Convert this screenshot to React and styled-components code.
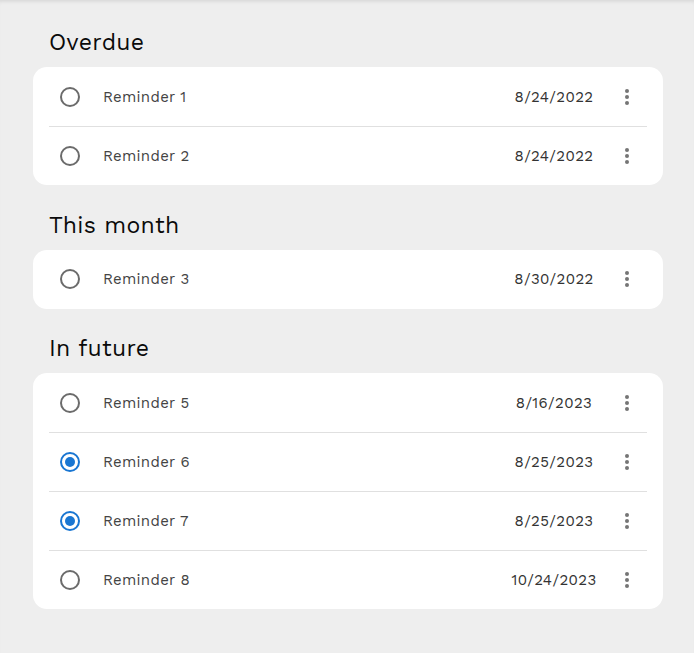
import React from "react";
import styled, { createGlobalStyle } from "styled-components";

const sections = [
  {
    title: "Overdue",
    items: [
      { name: "Reminder 1", date: "8/24/2022" },
      { name: "Reminder 2", date: "8/24/2022" },
    ],
  },
  {
    title: "This month",
    items: [{ name: "Reminder 3", date: "8/30/2022" }],
  },
  {
    title: "In future",
    items: [
      { name: "Reminder 5", date: "8/16/2023" },
      { name: "Reminder 6", date: "8/25/2023", done: true },
      { name: "Reminder 7", date: "8/25/2023", done: true },
      { name: "Reminder 8", date: "10/24/2023" },
    ],
  },
];

const GlobalStyle = createGlobalStyle`
  html, body {
    margin: 0;
    background: #eeeeee;
    font-family: "Work Sans", Inter, "Noto Sans", sans-serif;
  }
`;

const Page = styled.div`
  min-height: 653px;
  box-sizing: border-box;
  padding: 29px 31px 24px 33px;
  background: #eeeeee;
  box-shadow: inset 0 4px 4px -3px rgba(0, 0, 0, 0.12);
`;

const Section = styled.section`
  & + & {
    margin-top: 26.5px;
  }
`;

const Heading = styled.h2`
  margin: 0 0 10px 16px;
  font-size: 23px;
  line-height: 28px;
  font-weight: 400;
  color: #0a0a0a;
  letter-spacing: 0.3px;
`;

const Card = styled.div`
  background: #fff;
  border-radius: 14px;
  padding: 0 16px;
`;

const Row = styled.div`
  display: flex;
  align-items: center;
  box-sizing: border-box;
  height: 59px;
  & + & {
    border-top: 1px solid #e0e0e0;
  }
`;

const RadioBox = styled.span`
  width: 42px;
  height: 42px;
  display: flex;
  align-items: center;
  justify-content: center;
  flex: none;
`;

const Ring = styled.span`
  width: 20px;
  height: 20px;
  box-sizing: border-box;
  border-radius: 50%;
  border: 2px solid ${(p) => (p.$on ? "#1976d2" : "#6b6b6b")};
  display: flex;
  align-items: center;
  justify-content: center;
  &::after {
    content: "";
    width: 10px;
    height: 10px;
    border-radius: 50%;
    background: #1976d2;
    display: ${(p) => (p.$on ? "block" : "none")};
  }
`;

const Name = styled.span`
  flex: 1;
  margin-left: 12px;
  font-size: 15px;
  color: #444;
  letter-spacing: 0.3px;
`;

const DateText = styled.span`
  width: 100px;
  text-align: center;
  font-size: 15px;
  color: #333;
  letter-spacing: 0.4px;
`;

const MoreButton = styled.span`
  width: 40px;
  height: 40px;
  display: flex;
  align-items: center;
  justify-content: center;
  margin-left: 3px;
  color: #757575;
`;

const MoreIcon = () => (
  <svg width="24" height="24" viewBox="0 0 24 24" fill="currentColor">
    <circle cx="12" cy="6" r="2" />
    <circle cx="12" cy="12" r="2" />
    <circle cx="12" cy="18" r="2" />
  </svg>
);

const App = () => {
  return (
    <>
      <GlobalStyle />
      <Page>
        {sections.map((s) => (
          <Section key={s.title}>
            <Heading>{s.title}</Heading>
            <Card>
              {s.items.map((it) => (
                <Row key={it.name}>
                  <RadioBox>
                    <Ring $on={it.done} />
                  </RadioBox>
                  <Name>{it.name}</Name>
                  <DateText>{it.date}</DateText>
                  <MoreButton>
                    <MoreIcon />
                  </MoreButton>
                </Row>
              ))}
            </Card>
          </Section>
        ))}
      </Page>
    </>
  );
};

export default App;
